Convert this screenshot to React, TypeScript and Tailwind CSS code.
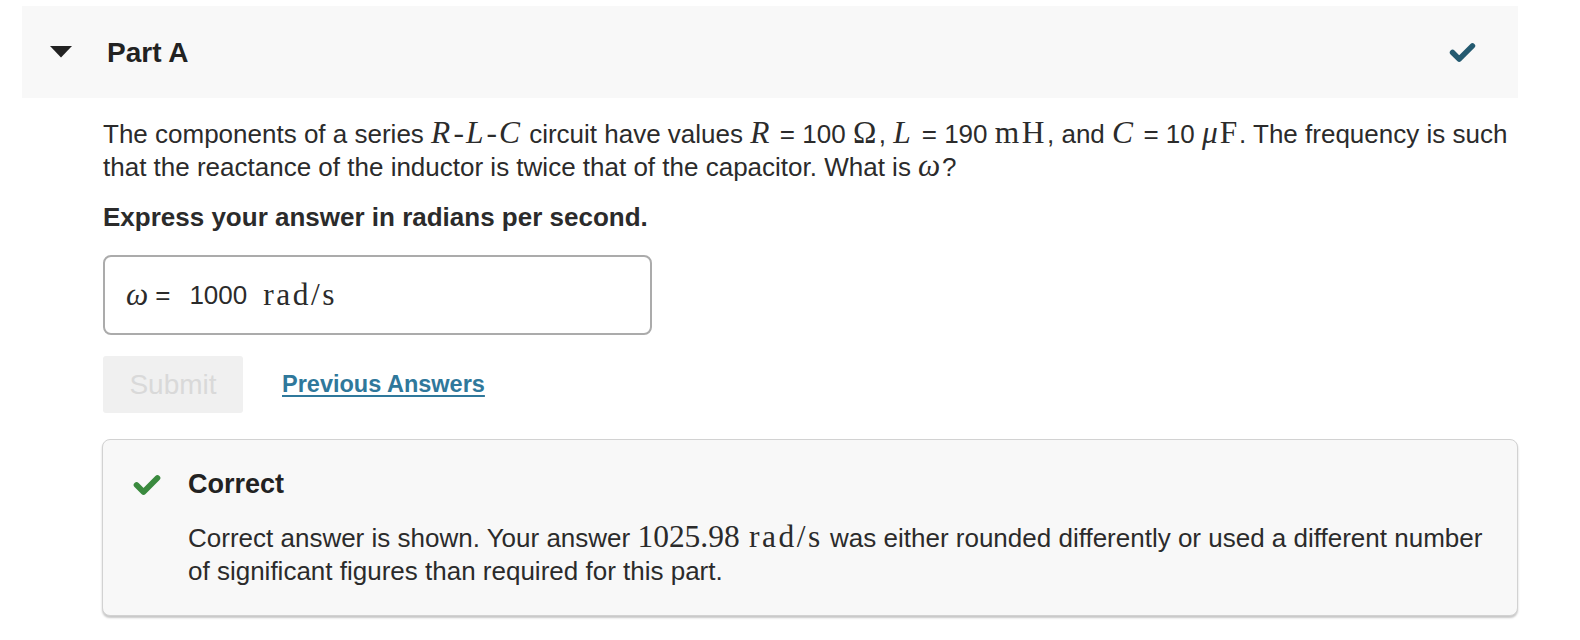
import React from "react";

const Check = ({ className }: { className?: string }) => (
  <svg viewBox="0 0 24 19" className={className} fill="none">
    <path d="M3 9.5 L9 15.5 L21 3.5" stroke="currentColor" strokeWidth="5" strokeLinecap="round" strokeLinejoin="round" />
  </svg>
);

const S = ({ children, className = "" }: { children: React.ReactNode; className?: string }) => (
  <span className={"font-['Liberation_Serif',serif] text-[1.21em] leading-[0] " + className}>{children}</span>
);

export default function App() {
  return (
    <div className="w-[1580px] h-[640px] bg-white overflow-hidden text-[#2b2b2b] font-['Liberation_Sans',Arial,sans-serif]">
      <div className="pt-[6px] pl-[22px] pr-[62px]">
        <div className="h-[92px] bg-[#f8f8f8] flex items-center pl-[28px] pr-[42px]">
          <svg viewBox="0 0 22 12" className="w-[22px] h-[12px] text-[#222]">
            <path d="M0 0 L22 0 L11 11.5 Z" fill="currentColor" />
          </svg>
          <div className="ml-[35px] text-[28px] font-bold leading-[33px] text-[#222]">Part A</div>
          <div className="ml-auto text-[#245a70]">
            <Check className="w-[27px] h-[21px]" />
          </div>
        </div>
      </div>

      <div className="pl-[103px] pr-[56px] pt-[20px] text-[26px] leading-[33px]">
        <p>
          The components of a series{" "}
          <S>
            <i className="pr-[0.1em]">R</i>
            <span className="mr-[2px]">-</span>
            <i className="pr-[0.1em]">L</i>
            <span className="mr-[2px]">-</span>
            <i className="pr-[0.06em]">C</i>
          </S>{" "}
          circuit have values{" "}
          <S className="italic pr-[0.1em]">R</S> = 100{" "}
          <S className="tracking-[0.08em]">Ω</S>,{" "}
          <S className="italic pr-[0.12em]">L</S> = 190{" "}
          <S className="tracking-[0.08em]">mH</S>, and{" "}
          <S className="italic pr-[0.1em]">C</S> = 10{" "}
          <S className="italic pr-[0.06em]">μ</S>
          <S className="tracking-[0.06em]">F</S>. The frequency is such that the reactance of the inductor is twice
          that of the capacitor. What is <S className="italic pr-[0.05em]">ω</S>?
        </p>
        <p className="mt-[17px] font-bold">Express your answer in radians per second.</p>

        <div className="mt-[21px] w-[549px] h-[80px] border-2 border-[#ababab] rounded-[8px] flex items-center pl-[21px] bg-white">
          <S className="italic leading-none">ω</S>
          <span className="ml-[7px]">=</span>
          <span className="ml-[19px]">1000</span>
          <S className="ml-[16px] tracking-[0.08em] leading-none">rad/s</S>
        </div>

        <div className="mt-[21px] flex items-center">
          <div className="w-[140px] h-[57px] bg-[#f0f0f0] rounded-[3px] text-[#d9d9d9] text-[28px] flex items-center justify-center">
            Submit
          </div>
          <a className="ml-[39px] font-bold text-[23.5px] text-[#2f789b] underline underline-offset-[3px] decoration-2">
            Previous Answers
          </a>
        </div>

        <div className="mt-[26px] -ml-px mr-[6px] h-[177px] border border-[#d2d2d2] rounded-[8px] bg-[#f8f8f8] shadow-[0_2px_2px_rgba(0,0,0,0.22)] pt-[28px] pl-[30px] pr-[20px]">
          <div className="flex items-center">
            <Check className="w-[28px] h-[22px] text-[#3a8a3e]" />
            <div className="ml-[27px] text-[27px] font-bold leading-[33px] text-[#222]">Correct</div>
          </div>
          <p className="mt-[21px] pl-[55px]">
            Correct answer is shown. Your answer <S>1025.98</S>
            <S className="ml-[0.3em] tracking-[0.08em]">rad/s</S> was either rounded differently or used a different
            number of significant figures than required for this part.
          </p>
        </div>
      </div>
    </div>
  );
}
